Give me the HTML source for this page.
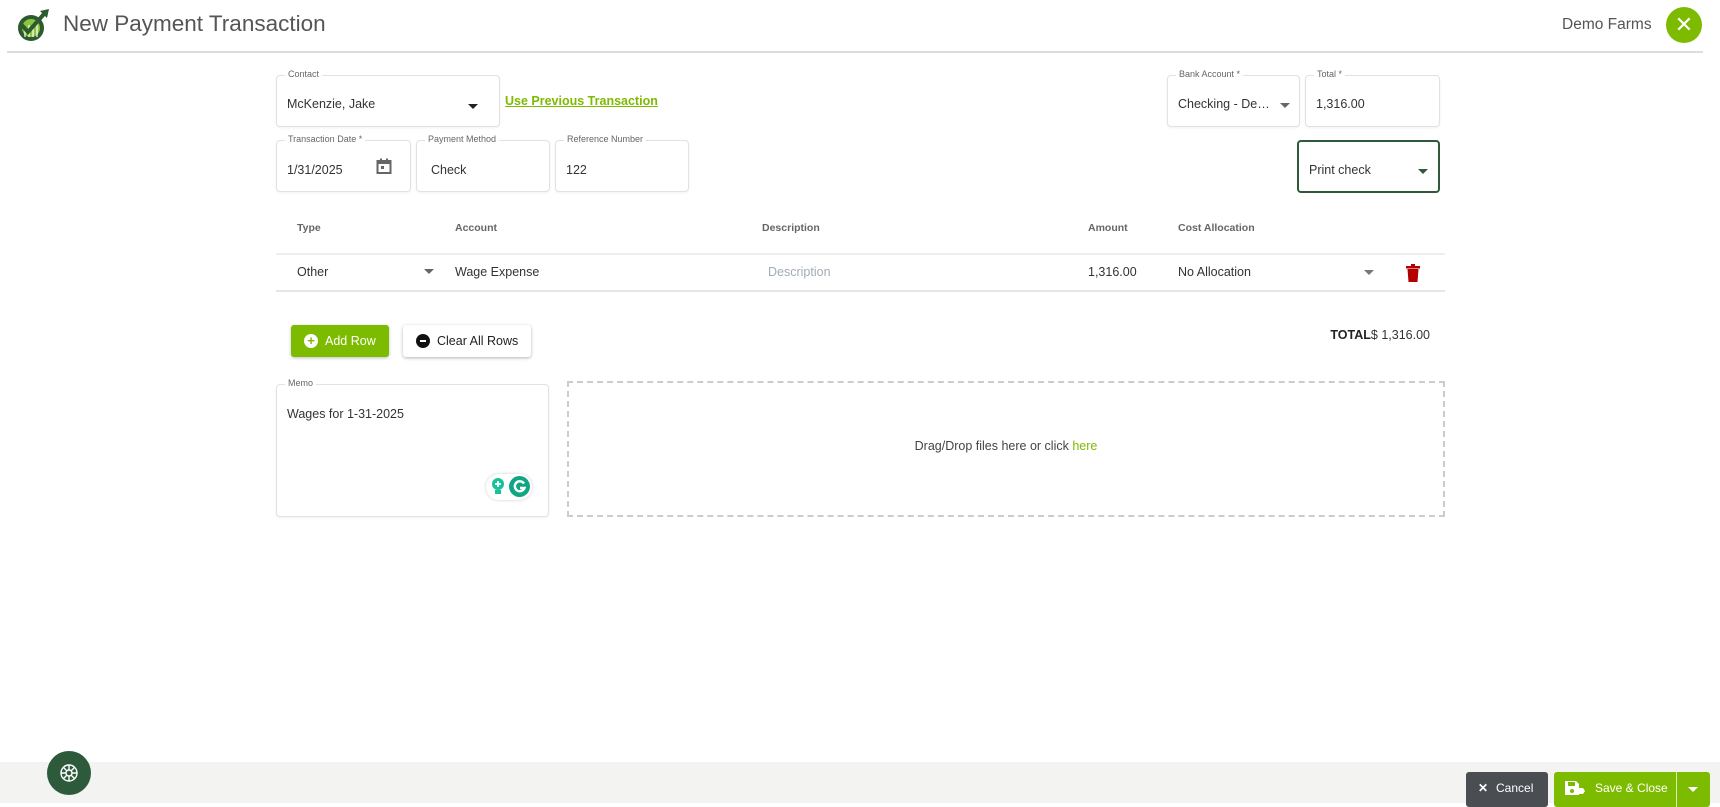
<!DOCTYPE html>
<html><head><meta charset="utf-8"><style>
*{box-sizing:border-box;margin:0;padding:0}
body{width:1720px;height:803px;position:relative;background:#fff;font-family:"Liberation Sans",sans-serif;color:#333;overflow:hidden;font-size:12px}
.a{position:absolute}
.box{position:absolute;border:1px solid #e2e2e2;border-radius:4px;box-shadow:0 1px 2px rgba(0,0,0,.06)}
.lbl{position:absolute;top:-7px;left:8px;background:#fff;padding:0 3px;font-size:9px;color:#666}
.val{position:absolute;left:10px;font-size:12.5px;color:#333}
.tri{position:absolute;width:0;height:0;border-left:5px solid transparent;border-right:5px solid transparent;border-top:5px solid #555}
.th{position:absolute;top:222px;font-size:10.5px;font-weight:bold;color:#666}
.td{position:absolute;top:265px;font-size:12.5px;color:#333}
</style></head><body>
<!-- header -->
<svg class="a" style="left:14px;top:8px" width="38" height="36" viewBox="0 0 38 36">
<circle cx="17" cy="20" r="13" fill="#2e5a30"/>
<circle cx="17" cy="20" r="9" fill="#8cc63f"/>
<rect x="10" y="20" width="2" height="9" fill="#fff" opacity=".6"/><rect x="14" y="17" width="2" height="12" fill="#fff" opacity=".6"/><rect x="18" y="19" width="2" height="10" fill="#fff" opacity=".6"/><rect x="22" y="15" width="2" height="14" fill="#fff" opacity=".6"/>
<path d="M6 15 L14 24 L30 6" stroke="#2e5a30" stroke-width="4" fill="none"/>
<path d="M26 3 L35 1 L33 10 Z" fill="#2e5a30"/>
</svg>
<div class="a" style="left:63px;top:11px;font-size:22.5px;color:#555">New Payment Transaction</div>
<div class="a" style="left:1562px;top:16px;font-size:15.5px;color:#555">Demo Farms</div>
<div class="a" style="left:1666px;top:7px;width:36px;height:36px;border-radius:50%;background:#7dbb00;color:#fff;font-size:22px;line-height:36px;text-align:center">✕</div>
<div class="a" style="left:7px;top:51px;width:1696px;height:2px;background:#ddd"></div>

<!-- top fields -->
<div class="box" style="left:276px;top:75px;width:224px;height:52px"><span class="lbl">Contact</span><span class="val" style="top:21px">McKenzie, Jake</span><div class="tri" style="left:191px;top:28px;border-top-color:#222"></div></div>
<div class="a" style="left:505px;top:94px;font-size:12.5px;font-weight:bold;color:#7dbb00;text-decoration:underline">Use Previous Transaction</div>
<div class="box" style="left:276px;top:140px;width:135px;height:52px"><span class="lbl">Transaction Date *</span><span class="val" style="top:22px">1/31/2025</span>
<svg class="a" style="left:99px;top:17px" width="16" height="17" viewBox="0 0 16 17"><rect x="1.5" y="3" width="13" height="12" fill="none" stroke="#666" stroke-width="2"/><rect x="1.5" y="3" width="13" height="3" fill="#666"/><rect x="4" y="0.5" width="2" height="3" fill="#666"/><rect x="10" y="0.5" width="2" height="3" fill="#666"/><rect x="5" y="8" width="3" height="3" fill="#666"/></svg></div>
<div class="box" style="left:416px;top:140px;width:134px;height:52px"><span class="lbl">Payment Method</span><span class="val" style="top:22px;left:14px">Check</span></div>
<div class="box" style="left:555px;top:140px;width:134px;height:52px"><span class="lbl">Reference Number</span><span class="val" style="top:22px">122</span></div>
<div class="box" style="left:1167px;top:75px;width:133px;height:52px"><span class="lbl">Bank Account *</span><span class="val" style="top:21px">Checking - De…</span><div class="tri" style="left:112px;top:27px;border-top-color:#666"></div></div>
<div class="box" style="left:1305px;top:75px;width:135px;height:52px"><span class="lbl">Total *</span><span class="val" style="top:21px">1,316.00</span></div>
<div class="a" style="left:1297px;top:140px;width:143px;height:53px;border:2px solid #2e5a3a;border-radius:4px"><span class="val" style="top:21px">Print check</span><div class="tri" style="left:119px;top:27px;border-top-color:#2e5a3a"></div></div>

<!-- table -->
<div class="th" style="left:297px">Type</div>
<div class="th" style="left:455px">Account</div>
<div class="th" style="left:762px">Description</div>
<div class="th" style="left:1088px">Amount</div>
<div class="th" style="left:1178px">Cost Allocation</div>
<div class="a" style="left:276px;top:253px;width:1169px;height:2px;background:#eee"></div>
<div class="td" style="left:297px">Other</div>
<div class="tri" style="left:424px;top:269px;border-top-color:#666"></div>
<div class="td" style="left:455px">Wage Expense</div>
<div class="td" style="left:768px;color:#a3acb5">Description</div>
<div class="td" style="left:1088px">1,316.00</div>
<div class="td" style="left:1178px">No Allocation</div>
<div class="tri" style="left:1364px;top:270px;border-top-color:#777"></div>
<svg class="a" style="left:1406px;top:264px" width="14" height="18" viewBox="0 0 14 18"><rect x="0" y="2" width="14" height="2.5" fill="#b30000"/><rect x="5" y="0" width="4" height="2" fill="#b30000"/><path d="M1.5 5 H12.5 L11.5 18 H2.5 Z" fill="#b30000"/></svg>
<div class="a" style="left:276px;top:290px;width:1169px;height:2px;background:#e6e6e6"></div>

<!-- buttons -->
<div class="a" style="left:291px;top:325px;width:98px;height:32px;background:#7dbb00;border-radius:3px;box-shadow:0 1px 3px rgba(0,0,0,.25);color:#fff;font-size:12.5px;line-height:32px"><span class="a" style="left:13px;top:9px;width:14px;height:14px;border-radius:50%;background:#fff;color:#7dbb00;font-size:13px;line-height:14px;text-align:center;font-weight:bold">+</span><span class="a" style="left:34px">Add Row</span></div>
<div class="a" style="left:403px;top:325px;width:128px;height:32px;background:#fff;border-radius:3px;box-shadow:0 1px 3px rgba(0,0,0,.3);color:#222;font-size:12.5px;line-height:32px"><span class="a" style="left:13px;top:9px;width:14px;height:14px;border-radius:50%;background:#111"><span class="a" style="left:4px;top:6px;width:6px;height:2px;background:#fff"></span></span><span class="a" style="left:34px">Clear All Rows</span></div>
<div class="a" style="left:1230px;width:200px;text-align:right;top:328px;font-size:12.5px;color:#333"><b style="color:#222">TOTAL</b>$ 1,316.00</div>

<!-- memo -->
<div class="box" style="left:276px;top:384px;width:273px;height:133px"><span class="lbl">Memo</span><span class="val" style="top:22px">Wages for 1-31-2025</span>
<div class="a" style="left:209px;top:89px;width:46px;height:26px;border-radius:13px;background:#fff;box-shadow:0 0 3px rgba(0,0,0,.2)"></div>
<svg class="a" style="left:214px;top:93px" width="14" height="18" viewBox="0 0 14 18"><circle cx="7" cy="6" r="6" fill="#15c39a"/><rect x="4" y="12" width="6" height="4" fill="#15c39a"/><path d="M7 3v6M4 6h6" stroke="#fff" stroke-width="1.8"/></svg>
<svg class="a" style="left:232px;top:91px" width="21" height="21" viewBox="0 0 21 21"><circle cx="10.5" cy="10.5" r="10.5" fill="#11a683"/><path d="M15 7.5 A5 5 0 1 0 15.5 12 H11" stroke="#fff" stroke-width="2.4" fill="none"/></svg>
</div>
<div class="a" style="left:567px;top:381px;width:878px;height:136px;border:2px dashed #ccc"></div>
<div class="a" style="left:567px;top:439px;width:878px;text-align:center;font-size:12.5px;color:#444">Drag/Drop files here or click <span style="color:#7dbb00">here</span></div>

<!-- footer -->
<div class="a" style="left:0;top:762px;width:1720px;height:41px;background:#f3f3f2"></div>
<div class="a" style="left:47px;top:751px;width:44px;height:44px;border-radius:50%;background:#2d5a3a"></div>
<svg class="a" style="left:59px;top:763px" width="20" height="20" viewBox="0 0 20 20" fill="none" stroke="#fff" stroke-width="1.4"><circle cx="10" cy="10" r="8"/><circle cx="10" cy="10" r="3"/><path d="M10 2v5M10 13v5M2 10h5M13 10h5M4.5 4.5l3.3 3.3M12.2 12.2l3.3 3.3M15.5 4.5l-3.3 3.3M7.8 12.2l-3.3 3.3"/></svg>
<div class="a" style="left:1466px;top:772px;width:82px;height:35px;background:#4a4d52;border-radius:3px;color:#fff;font-size:12px;line-height:32px"><span class="a" style="left:12px;font-weight:bold">✕</span><span class="a" style="left:30px">Cancel</span></div>
<div class="a" style="left:1554px;top:772px;width:156px;height:35px;background:#7dbb00;border-radius:3px;color:#fff;font-size:12px;line-height:32px">
<svg class="a" style="left:10px;top:8px" width="22" height="16" viewBox="0 0 22 16"><path d="M1 1h11l3 3v11H1z" fill="#fff"/><rect x="4" y="2" width="7" height="4" fill="#7dbb00"/><circle cx="8" cy="11" r="2" fill="#7dbb00"/><path d="M15 8h4l2 3-2 3h-4z" fill="#fff"/></svg>
<span class="a" style="left:41px">Save &amp; Close</span>
<span class="a" style="left:122px;top:0;width:1px;height:35px;background:#fff;opacity:.7"></span>
<div class="tri" style="left:134px;top:15px;border-top-color:#fff"></div></div>
</body></html>
